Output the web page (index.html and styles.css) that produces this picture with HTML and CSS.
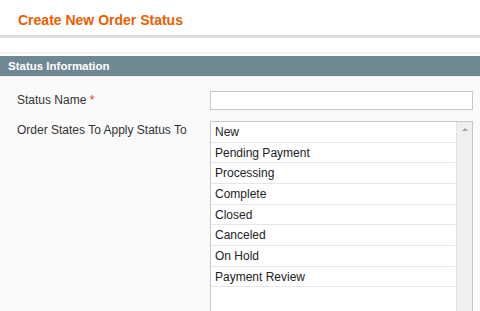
FILE: index.html
```html
<!DOCTYPE html>
<html lang="en">
<head>
    <meta charset="UTF-8">
    <meta name="viewport" content="width=device-width, initial-scale=1.0">
    <title>Create New Order Status</title>
    <link rel="stylesheet" href="styles.css">
</head>
<body>
    <div class="page-head">
        <h3>Create New Order Status</h3>
    </div>
    <div class="fieldset-wrap">
        <div class="fieldset-head">Status Information</div>
    </div>
    <div class="fieldset">
        <div class="row">
            <label class="label">Status Name <span class="required">*</span></label>
            <div class="value">
                <input type="text" class="input-text">
            </div>
        </div>
        <div class="row">
            <label class="label">Order States To Apply Status To</label>
            <div class="value">
                <div class="multiselect">
                    <div class="options">
                        <div class="option">New</div>
                        <div class="option">Pending Payment</div>
                        <div class="option">Processing</div>
                        <div class="option">Complete</div>
                        <div class="option">Closed</div>
                        <div class="option">Canceled</div>
                        <div class="option">On Hold</div>
                        <div class="option">Payment Review</div>
                    </div>
                    <div class="scrollbar">
                        <span class="arrow-up"></span>
                    </div>
                </div>
            </div>
        </div>
    </div>
</body>
</html>
```

FILE: styles.css
```css
body {
    margin: 0;
    font-family: "Liberation Sans", Arial, sans-serif;
    font-size: 12px;
    color: #2f2f2f;
    background: #fff;
    overflow: hidden;
}

.page-head {
    height: 38px;
    border-bottom: 3px solid #dcdcdc;
    padding: 0 18px;
    box-sizing: border-box;
}

.page-head h3 {
    margin: 0;
    padding-top: 12px;
    font-size: 14px;
    font-weight: bold;
    color: #eb5e00;
    line-height: 16px;
}

.fieldset-wrap {
    margin-top: 14px;
    border-top: 2px solid #eef0f0;
    padding-top: 2px;
}

.fieldset-head {
    height: 20px;
    line-height: 20px;
    padding-left: 8px;
    font-weight: bold;
    font-size: 11.5px;
    color: #fff;
    background: #6f8992;
    border-bottom: 1px solid #e8eded;
}

.fieldset {
    background: #fafafa;
    padding: 14px 7px 0 17px;
    height: 240px;
}

.row {
    display: flex;
    margin-bottom: 11px;
}

.label {
    width: 193px;
    line-height: 19px;
    color: #333;
}

.required {
    color: #eb340a;
}

.value {
    flex: 1;
}

.input-text {
    display: block;
    width: 263px;
    height: 19px;
    box-sizing: border-box;
    margin: 0;
    border: 1px solid #c8c8c8;
    background: #fff;
}

.multiselect {
    display: flex;
    width: 263px;
    height: 200px;
    border: 1px solid #c8c8c8;
    border-bottom: none;
    box-sizing: border-box;
    background: #fff;
}

.options {
    flex: 1;
    padding-right: 1px;
}

.option {
    height: 19.67px;
    line-height: 20px;
    padding-left: 4px;
    border-bottom: 1px solid #e6e6e6;
    color: #222;
}

.scrollbar {
    width: 15px;
    background: #efefef;
    border-left: 1px solid #e2e2e2;
    position: relative;
}

.arrow-up {
    position: absolute;
    top: 6px;
    left: 5px;
    width: 0;
    height: 0;
    border-left: 3px solid transparent;
    border-right: 3px solid transparent;
    border-bottom: 3px solid #a3a3a3;
}
```
